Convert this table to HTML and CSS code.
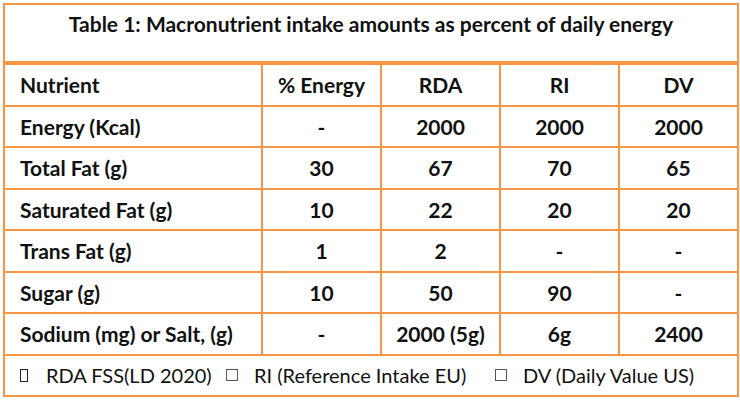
FILE: index.html
```html
<!DOCTYPE html>
<html>
<head>
<meta charset="utf-8">
<link rel="stylesheet" href="styles.css">
</head>
<body>
<table class="nutri">
  <colgroup>
    <col class="c-name"><col class="c-val"><col class="c-val"><col class="c-val"><col class="c-val">
  </colgroup>
  <tr class="title-row"><th colspan="5" class="title">Table 1: Macronutrient intake amounts as percent of daily energy</th></tr>
  <tr class="head"><th class="name">Nutrient</th><th>% Energy</th><th>RDA</th><th>RI</th><th>DV</th></tr>
  <tr><td class="name">Energy (Kcal)</td><td>-</td><td>2000</td><td>2000</td><td>2000</td></tr>
  <tr><td class="name">Total Fat (g)</td><td>30</td><td>67</td><td>70</td><td>65</td></tr>
  <tr><td class="name">Saturated Fat (g)</td><td>10</td><td>22</td><td>20</td><td>20</td></tr>
  <tr><td class="name">Trans Fat (g)</td><td>1</td><td>2</td><td>-</td><td>-</td></tr>
  <tr><td class="name">Sugar (g)</td><td>10</td><td>50</td><td>90</td><td>-</td></tr>
  <tr><td class="name">Sodium (mg) or Salt, (g)</td><td>-</td><td>2000 (5g)</td><td>6g</td><td>2400</td></tr>
  <tr class="foot"><td colspan="5" class="legend">
    <div class="legend-row">
      <span class="item item1"><span class="box box-narrow"></span><span class="lg lg-first">RDA FSS(LD 2020)</span></span>
      <span class="item item2"><span class="box"></span><span class="lg">RI (Reference Intake EU)</span></span>
      <span class="item"><span class="box"></span><span class="lg">DV (Daily Value US)</span></span>
    </div>
  </td></tr>
</table>
</body>
</html>
```

FILE: styles.css
```css
html, body {
  margin: 0;
  padding: 0;
  background: #ffffff;
}
body {
  padding: 3px 0 0 3px;
  font-family: "Lato", "Liberation Sans", sans-serif;
  color: #111111;
}
.nutri {
  border-collapse: collapse;
  width: 734px;
  table-layout: fixed;
  font-size: 21px;
  line-height: 25px;
}
.c-name { width: 258px; }
.c-val { width: 119px; }
.nutri th, .nutri td {
  border: 2px solid #f79646;
  font-weight: 700;
  text-align: center;
  padding: 0;
  height: 39.5px;
  vertical-align: middle;
}
.nutri .name {
  text-align: left;
  padding-left: 15px;
}
.title-row .title {
  height: 50px;
  vertical-align: top;
  padding-top: 6px;
  border-bottom-width: 4px;
}
.foot td {
  height: 39.5px;
}
.nutri .legend {
  text-align: left;
  font-weight: 400;
  font-size: 20px;
  padding-left: 15px;
  white-space: nowrap;
}
.legend-row {
  display: flex;
  align-items: center;
}
.item {
  display: inline-flex;
  align-items: center;
}
.item1 { width: 206px; }
.item2 { width: 269px; }
.box {
  display: inline-block;
  width: 10px;
  height: 10px;
  border: 1px solid #555;
  flex: none;
}
.box-narrow {
  width: 6px;
  height: 11px;
  border-color: #222;
}
.lg { margin-left: 16px; }
.lg-first { margin-left: 18px; }
```
